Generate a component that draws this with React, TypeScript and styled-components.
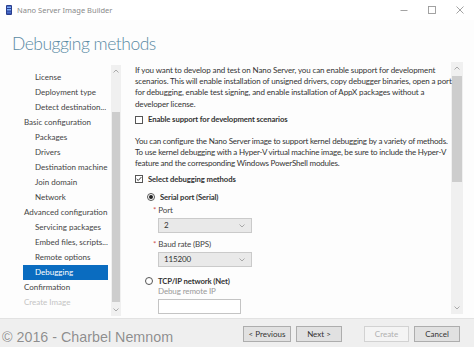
import styled, { createGlobalStyle } from 'styled-components';

const GlobalStyle = createGlobalStyle`
    html, body {
        margin: 0;
        padding: 0;
    }
    body {
        width: 474px;
        height: 347px;
        overflow: hidden;
        background: #fdfdfd;
        font-family: Lato, "Noto Sans", sans-serif;
        color: #333;
    }
`;

const StyledWindow = styled.div`
    display: flex;
    flex-direction: column;
    width: 474px;
    height: 347px;
    background: #fdfdfd;
`;

const TitleBar = styled.div`
    display: flex;
    align-items: center;
    height: 20px;
    padding-left: 6px;
    background: #fff;

    .title {
        margin-left: 5px;
        font-family: "Noto Sans", sans-serif;
        font-size: 7.5px;
        color: #8a8a8a;
    }
`;

const Controls = styled.div`
    display: flex;
    margin-left: auto;
    height: 20px;
`;

const ControlButton = styled.div`
    display: flex;
    align-items: center;
    justify-content: center;
    width: 28px;
    height: 20px;
`;

const Header = styled.h1`
    margin: 0;
    height: 40px;
    padding: 12px 0 0 12px;
    box-sizing: border-box;
    font-size: 17.5px;
    letter-spacing: -0.5px;
    line-height: 24px;
    font-weight: 300;
    color: #5a8aa4;
`;

const Body = styled.div`
    display: flex;
    height: 258px;
`;

const Nav = styled.nav`
    display: flex;
    width: 120px;
    margin-right: 7px;
    flex: none;
`;

const NavList = styled.ul`
    list-style: none;
    flex: 1;
    margin: 0;
    padding: 10px 3px 0 23px;
`;

const NavItem = styled.li<{ $level: 0 | 1; $selected?: boolean; $disabled?: boolean }>`
    height: 15px;
    line-height: 15px;
    padding-left: ${(p) => (p.$level ? 12 : 1)}px;
    font-size: 8px;
    white-space: nowrap;
    overflow: hidden;
    color: ${(p) => (p.$selected ? '#fff' : p.$disabled ? '#c4c4c4' : '#444')};
    background: ${(p) => (p.$selected ? '#0a6cc0' : 'transparent')};
`;

const ScrollBar = styled.div<{ $width: number; $top: number; $bottom: number }>`
    display: flex;
    flex-direction: column;
    flex: none;
    width: ${(p) => p.$width}px;
    margin: ${(p) => p.$top}px 1px ${(p) => p.$bottom}px 0;
    background: #f0f0f0;
`;

const Arrow = styled.div`
    display: flex;
    align-items: center;
    justify-content: center;
    height: 12px;
    flex: none;
`;

const Track = styled.div`
    flex: 1;
`;

const Thumb = styled.div<{ $offset: number; $size: number }>`
    margin: ${(p) => p.$offset}px 1px 0;
    height: ${(p) => p.$size}px;
    background: #cdcdcd;
`;

const Content = styled.div`
    display: flex;
    flex: 1;
    min-width: 0;
`;

/* text runs a little over the scrollbar in the original, so keep it on top */
const Inner = styled.div`
    position: relative;
    z-index: 1;
    flex: 1;
    min-width: 0;
    padding: 5px 0 0 8px;
    font-size: 8px;
    letter-spacing: -0.12px;
    line-height: 11.2px;
    color: #333;
`;

const Para = styled.p<{ $top: number; $tight?: boolean }>`
    margin: ${(p) => p.$top}px 0 0;
    white-space: nowrap;
    letter-spacing: ${(p) => (p.$tight ? '-0.2px' : 'inherit')};
`;

const Option = styled.label<{ $top: number; $indent: number }>`
    display: flex;
    align-items: center;
    gap: 5px;
    height: 12px;
    margin: ${(p) => p.$top}px 0 0 ${(p) => p.$indent}px;
    font-size: 7.7px;
    letter-spacing: -0.1px;
    font-weight: 700;
    color: #333;
`;

const Box = styled.span`
    display: flex;
    align-items: center;
    justify-content: center;
    width: 8px;
    height: 8px;
    box-sizing: border-box;
    border: 1px solid #555;
    background: #fff;
`;

const Radio = styled.span<{ $checked?: boolean }>`
    display: flex;
    align-items: center;
    justify-content: center;
    width: 8px;
    height: 8px;
    box-sizing: border-box;
    border: 1px solid #555;
    border-radius: 50%;
    background: #fff;

    &::after {
        content: '';
        display: ${(p) => (p.$checked ? 'block' : 'none')};
        width: 4px;
        height: 4px;
        border-radius: 50%;
        background: #222;
    }
`;

const FieldLabel = styled.div<{ $top: number; $muted?: boolean }>`
    margin: ${(p) => p.$top}px 0 0 ${(p) => (p.$muted ? 23 : 18)}px;
    height: 11px;
    line-height: 11px;
    color: ${(p) => (p.$muted ? '#999' : '#444')};

    .req {
        color: #d05050;
        margin-right: 2px;
    }
`;

const Select = styled.div<{ $top: number }>`
    display: flex;
    align-items: center;
    justify-content: space-between;
    width: 94px;
    height: 15px;
    margin: ${(p) => p.$top}px 0 0 23px;
    padding: 0 6px 0 5px;
    box-sizing: border-box;
    border: 1px solid #cacaca;
    background: #e9e9e9;
    color: #333;
`;

const TextBox = styled.div`
    width: 83px;
    height: 15px;
    margin: 2px 0 0 23px;
    box-sizing: border-box;
    border: 1px solid #c4c4c4;
    background: #fff;
`;

const Footer = styled.div`
    display: flex;
    align-items: center;
    flex: 1;
    padding: 2px 14px 0 2px;
    background: #efefef;
    border-top: 1px solid #e2e2e2;

    .mark {
        font-family: "Liberation Sans", Arial, sans-serif;
        font-size: 14.3px;
        color: #8e8e8e;
        padding-top: 5px;
        text-shadow: 0 0 1px #fff;
    }
`;

const Buttons = styled.div`
    display: flex;
    margin-left: auto;
    gap: 5px;
`;

const Button = styled.button<{ $width: number; $gapBefore?: number; $disabled?: boolean }>`
    width: ${(p) => p.$width}px;
    height: 16px;
    margin-left: ${(p) => p.$gapBefore ?? 0}px;
    padding: 0;
    font-family: inherit;
    font-size: 8px;
    color: ${(p) => (p.$disabled ? '#b0b0b0' : '#333')};
    background: ${(p) => (p.$disabled ? '#f4f4f4' : '#e1e1e1')};
    border: 1px solid ${(p) => (p.$disabled ? '#d2d2d2' : '#adadad')};
`;

const Up = () => (
    <svg width="6" height="4" viewBox="0 0 6 4">
        <polyline points="0.5,3.5 3,1 5.5,3.5" fill="none" stroke="#a0a0a0" strokeWidth="0.9" />
    </svg>
);

const Down = () => (
    <svg width="6" height="4" viewBox="0 0 6 4">
        <polyline points="0.5,0.5 3,3 5.5,0.5" fill="none" stroke="#a0a0a0" strokeWidth="0.9" />
    </svg>
);

const Check = () => (
    <svg width="7" height="6" viewBox="0 0 7 6">
        <polyline points="0.8,3 2.6,4.8 6.2,0.8" fill="none" stroke="#222" strokeWidth="1.1" />
    </svg>
);

interface BarProps {
    width: number;
    top: number;
    bottom: number;
    offset: number;
    size: number;
}

const Bar = ({ width, top, bottom, offset, size }: BarProps) => (
    <ScrollBar $width={width} $top={top} $bottom={bottom}>
        <Arrow>
            <Up />
        </Arrow>
        <Track>
            <Thumb $offset={offset} $size={size} />
        </Track>
        <Arrow>
            <Down />
        </Arrow>
    </ScrollBar>
);

const navItems: { label: string; level: 0 | 1; selected?: boolean; disabled?: boolean }[] = [
    { label: 'License', level: 1 },
    { label: 'Deployment type', level: 1 },
    { label: 'Detect destination...', level: 1 },
    { label: 'Basic configuration', level: 0 },
    { label: 'Packages', level: 1 },
    { label: 'Drivers', level: 1 },
    { label: 'Destination machine', level: 1 },
    { label: 'Join domain', level: 1 },
    { label: 'Network', level: 1 },
    { label: 'Advanced configuration', level: 0 },
    { label: 'Servicing packages', level: 1 },
    { label: 'Embed files, scripts...', level: 1 },
    { label: 'Remote options', level: 1 },
    { label: 'Debugging', level: 1, selected: true },
    { label: 'Confirmation', level: 0 },
    { label: 'Create Image', level: 0, disabled: true },
];

export default function App() {
    return (
        <StyledWindow>
            <GlobalStyle />
            <TitleBar>
                <svg width="6" height="10" viewBox="0 0 6 10">
                    <rect x="0" y="0" width="6" height="10" rx="1" fill="#2b3f8f" />
                    <rect x="1" y="1.5" width="4" height="1.5" fill="#7fb0ff" />
                    <rect x="1" y="4" width="4" height="1.5" fill="#7fb0ff" />
                    <rect x="1" y="6.5" width="4" height="2" fill="#4a6fd0" />
                </svg>
                <span className="title">Nano Server Image Builder</span>
                <Controls>
                    <ControlButton>
                        <svg width="8" height="8" viewBox="0 0 8 8">
                            <line x1="0.5" y1="4.5" x2="7.5" y2="4.5" stroke="#999" strokeWidth="0.9" />
                        </svg>
                    </ControlButton>
                    <ControlButton>
                        <svg width="8" height="8" viewBox="0 0 8 8">
                            <rect x="0.5" y="0.5" width="7" height="7" fill="none" stroke="#999" strokeWidth="0.9" />
                        </svg>
                    </ControlButton>
                    <ControlButton>
                        <svg width="8" height="8" viewBox="0 0 8 8">
                            <path d="M0.5 0.5 L7.5 7.5 M7.5 0.5 L0.5 7.5" stroke="#999" strokeWidth="0.9" />
                        </svg>
                    </ControlButton>
                </Controls>
            </TitleBar>

            <Header>Debugging methods</Header>

            <Body>
                <Nav>
                    <NavList>
                        {navItems.map((item) => (
                            <NavItem
                                key={item.label}
                                $level={item.level}
                                $selected={item.selected}
                                $disabled={item.disabled}
                            >
                                {item.label}
                            </NavItem>
                        ))}
                    </NavList>
                    <Bar width={10} top={5} bottom={2} offset={35} size={190} />
                </Nav>

                <Content>
                    <Inner>
                        <Para $top={0}>
                            If you want to develop and test on Nano Server, you can enable support for development
                            <br />
                            scenarios. This will enable installation of unsigned drivers, copy debugger binaries, open a port
                            <br />
                            for debugging, enable test signing, and enable installation of AppX packages without a
                            <br />
                            developer license.
                        </Para>

                        <Option $top={4} $indent={0}>
                            <Box />
                            Enable support for development scenarios
                        </Option>

                        <Para $top={10} $tight>
                            You can configure the Nano Server image to support kernel debugging by a variety of methods.
                            <br />
                            To use kernel debugging with a Hyper-V virtual machine image, be sure to include the Hyper-V
                            <br />
                            feature and the corresponding Windows PowerShell modules.
                        </Para>

                        <Option $top={4} $indent={0}>
                            <Box>
                                <Check />
                            </Box>
                            Select debugging methods
                        </Option>

                        <Option $top={6} $indent={12}>
                            <Radio $checked />
                            Serial port (Serial)
                        </Option>
                        <FieldLabel $top={2}>
                            <span className="req">*</span>Port
                        </FieldLabel>
                        <Select $top={2}>
                            <span>2</span>
                            <Down />
                        </Select>
                        <FieldLabel $top={6}>
                            <span className="req">*</span>Baud rate (BPS)
                        </FieldLabel>
                        <Select $top={2}>
                            <span>115200</span>
                            <Down />
                        </Select>

                        <Option $top={8} $indent={10}>
                            <Radio />
                            TCP/IP network (Net)
                        </Option>
                        <FieldLabel $top={-1} $muted>
                            Debug remote IP
                        </FieldLabel>
                        <TextBox />
                    </Inner>
                    <Bar width={12} top={2} bottom={4} offset={2} size={106} />
                    <div style={{ width: 10 }} />
                </Content>
            </Body>

            <Footer>
                <span className="mark">© 2016 - Charbel Nemnom</span>
                <Buttons>
                    <Button $width={48}>&lt; Previous</Button>
                    <Button $width={46}>Next &gt;</Button>
                    <Button $width={45} $gapBefore={17} $disabled>
                        Create
                    </Button>
                    <Button $width={46}>Cancel</Button>
                </Buttons>
            </Footer>
        </StyledWindow>
    );
}
